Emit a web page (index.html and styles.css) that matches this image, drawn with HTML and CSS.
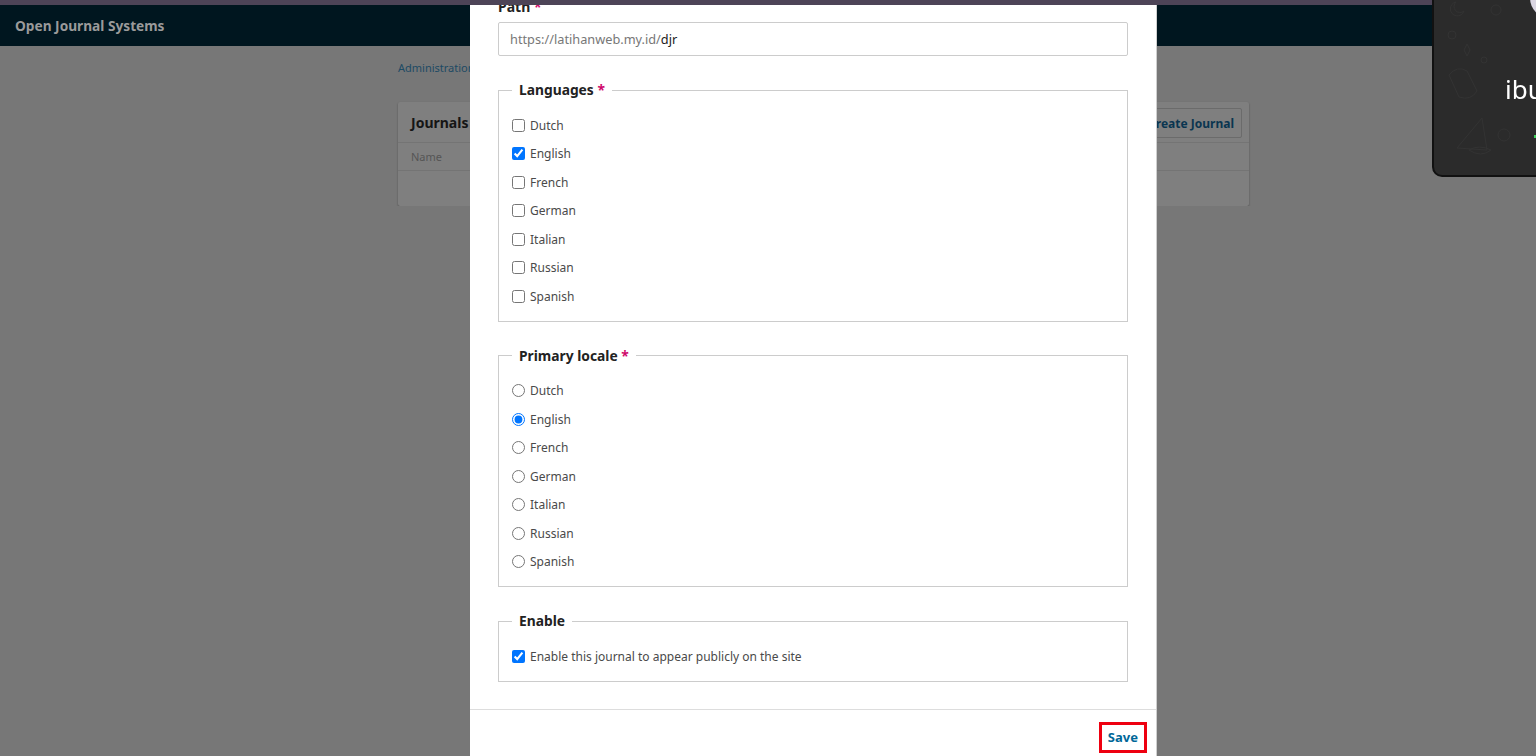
FILE: index.html
```html
<!DOCTYPE html>
<html>
  <head>
    <meta charset="utf-8">
    <title>Open Journal Systems</title>
    <link rel="stylesheet" href="styles.css">
  </head>
  <body>
    <div class='topstrip'></div>
    <header class='app-header'>
      <span class='brand'>Open Journal Systems</span>
    </header>
    <main class='page'>
      <nav class='crumbs'>Administration</nav>
      <section class='card'>
        <div class='card-head'>
          <h2>Journals</h2>
          <button class='btn-create'>Create Journal</button>
        </div>
        <div class='card-cols'>Name</div>
        <div class='card-row'></div>
      </section>
    </main>

    <div class='modal'>
      <div class='modal-body'>
        <label class='field-label'>Path <span class='req'>*</span></label>
        <div class='path-input'><span class='prefix'>https://latihanweb.my.id/</span><span class='value'>djr</span></div>

        <fieldset>
          <legend>Languages <span class='req'>*</span></legend>
          <label class='opt'><input type='checkbox' />Dutch</label>
          <label class='opt'><input type='checkbox' checked />English</label>
          <label class='opt'><input type='checkbox' />French</label>
          <label class='opt'><input type='checkbox' />German</label>
          <label class='opt'><input type='checkbox' />Italian</label>
          <label class='opt'><input type='checkbox' />Russian</label>
          <label class='opt'><input type='checkbox' />Spanish</label>
        </fieldset>

        <fieldset>
          <legend>Primary locale <span class='req'>*</span></legend>
          <label class='opt'><input type='radio' name='locale' />Dutch</label>
          <label class='opt'><input type='radio' name='locale' checked />English</label>
          <label class='opt'><input type='radio' name='locale' />French</label>
          <label class='opt'><input type='radio' name='locale' />German</label>
          <label class='opt'><input type='radio' name='locale' />Italian</label>
          <label class='opt'><input type='radio' name='locale' />Russian</label>
          <label class='opt'><input type='radio' name='locale' />Spanish</label>
        </fieldset>

        <fieldset>
          <legend>Enable</legend>
          <label class='opt'><input type='checkbox' checked />Enable this journal to appear publicly on the site</label>
        </fieldset>
      </div>
      <div class='modal-foot'>
        <button class='btn-save'>Save</button>
      </div>
    </div>

    <div class='callwin'>
      <div class='avatar'></div>
      <svg class='doodle' width='110' height='185' viewBox='0 0 110 185'>
        <g fill='none' stroke='#333' stroke-width='1'>
          <path d='M22 12 a7 7 0 1 0 8 9 a5 5 0 1 1 -8 -9z' />
          <circle cx='18' cy='45' r='4' />
          <path d='M30 60 l3 -6 l3 6 l-3 6z' />
          <circle cx='62' cy='20' r='5' />
          <path d='M15 85 q8 -10 18 -4 l10 20 q-6 10 -18 6z' />
          <circle cx='50' cy='70' r='3' />
          <path d='M48 128 l-25 30 l30 2z' />
          <circle cx='70' cy='145' r='6' />
          <path d='M35 160 q10 -6 22 0 q-10 8 -22 0z' />
        </g>
      </svg>
      <span class='callname'>ibu</span>
      <span class='dot'></span>
    </div>
  </body>
</html>
```

FILE: styles.css
```css
body {
  margin: 0;
  background-color: #777;
  font-family: 'Noto Sans', 'Open Sans', sans-serif;
  overflow: hidden;
}
.topstrip {
  height: 5px;
  background-color: #4d4457;
}
.app-header {
  height: 41px;
  background-color: #00161f;
  display: flex;
  align-items: center;
  padding-left: 15px;
}
.brand {
  color: #9a9a9a;
  font-size: 13.7px;
  font-weight: 700;
}
.page {
  margin-left: 398px;
  width: 851px;
  padding-top: 14px;
}
.crumbs {
  font-size: 11px;
  line-height: 15px;
  color: #1d4a64;
}
.card {
  margin-top: 27px;
  background-color: #7f7f7f;
  border-radius: 2px;
  box-shadow: 0 1px 2px rgba(0, 0, 0, 0.35);
}
.card-head {
  height: 40px;
  border-bottom: 1px solid #747474;
  display: flex;
  align-items: center;
  justify-content: space-between;
  padding: 0 7px 0 13px;
}
.card-head h2 {
  margin: 0;
  font-size: 14px;
  color: #151515;
}
.btn-create {
  height: 30px;
  margin-top: 2px;
  padding: 0 7px;
  border: 1px solid #6b6b6b;
  border-radius: 2px;
  background-color: #7f7f7f;
  color: #0a3550;
  font-family: 'Noto Sans', sans-serif;
  font-size: 12px;
  font-weight: 700;
}
.card-cols {
  height: 27px;
  border-bottom: 1px solid #747474;
  display: flex;
  align-items: center;
  padding-left: 13px;
  font-size: 11px;
  color: #555;
}
.card-row {
  height: 35px;
}

/* modal */
.modal {
  position: fixed;
  left: 470px;
  top: 5px;
  width: 686px;
  background-color: #fff;
  border-right: 1px solid #cfcfcf;
  overflow: hidden;
}
.modal-body {
  padding: 0 28px 27px;
}
.field-label {
  display: block;
  margin-top: -8px;
  font-size: 14px;
  font-weight: 700;
  line-height: 20px;
  color: #222;
}
.req {
  color: #d00a6c;
}
.path-input {
  margin-top: 5px;
  height: 34px;
  box-sizing: border-box;
  border: 1px solid #ccc;
  border-radius: 2px;
  display: flex;
  align-items: center;
  padding-left: 11px;
  font-size: 12.75px;
}
.prefix {
  color: #777;
}
.value {
  color: #222;
}
fieldset {
  margin: 24px 0 0;
  padding: 11px 13px 10px;
  border: 1px solid #ccc;
  min-width: 0;
}
legend {
  padding: 0 7px;
  font-size: 13.8px;
  font-weight: 700;
  line-height: 20px;
  color: #222;
}
.opt {
  display: flex;
  align-items: center;
  height: 28.5px;
  font-size: 12px;
  color: #4a4a4a;
}
.opt input {
  margin: 0 5px 0 0;
}
.modal-foot {
  border-top: 1px solid #ddd;
  padding: 12px 9px 12px;
  display: flex;
  justify-content: flex-end;
}
.btn-save {
  height: 31px;
  padding: 0 6px;
  border: 3px solid #ee0010;
  background-color: #fff;
  color: #006798;
  font-family: 'Noto Sans', sans-serif;
  font-size: 13px;
  font-weight: 700;
}

/* floating call window */
.callwin {
  position: fixed;
  left: 1432px;
  top: -12px;
  width: 110px;
  height: 185px;
  background-color: #2b2b2b;
  border: 2px solid #111;
  border-radius: 10px;
  overflow: hidden;
}
.doodle {
  position: absolute;
  left: 0;
  top: 0;
}
.avatar {
  position: absolute;
  left: 96px;
  top: -12px;
  width: 40px;
  height: 40px;
  border-radius: 50%;
  background-color: #d9d5e1;
}
.callname {
  position: absolute;
  left: 71px;
  top: 84px;
  color: #fff;
  font-size: 26px;
  line-height: 30px;
}
.dot {
  position: absolute;
  left: 100px;
  top: 145px;
  width: 3px;
  height: 3px;
  background-color: #3ecf5a;
}
```
